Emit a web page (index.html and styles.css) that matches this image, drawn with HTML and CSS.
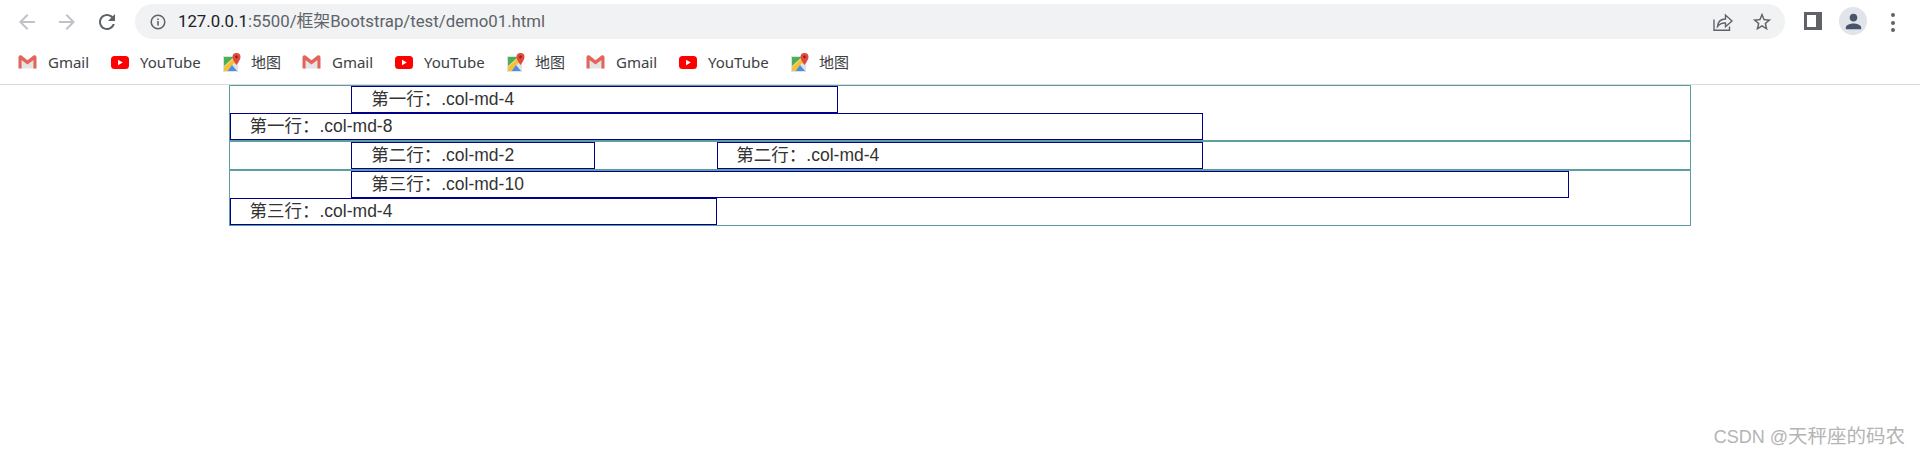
FILE: index.html
```html
<!DOCTYPE html>
<html lang="zh-CN">
<head>
<meta charset="utf-8">
<title>demo01</title>
<link rel="stylesheet" href="styles.css">
</head>
<body>
<svg class="defs" width="0" height="0" aria-hidden="true">
  <symbol id="i-gmail" viewBox="0 0 18 14">
    <path fill="#e4e4e4" d="M2 13.500h14V3L9 8 2 3z"/>
    <path fill="#d8d8d8" d="M2 13.500h1.500V5L2 3zM14.500 13.500H16V3l-1.500 2z"/>
    <path fill="#e5635b" d="M0 2.200C0 .6 1.800-.3 3 .6L9 5.200 15 .6c1.200-.9 3-.0 3 1.600V13.500h-3V5L9 9.500 3 5v8.500H0z"/>
  </symbol>
  <symbol id="i-yt" viewBox="0 0 18 13">
    <rect width="18" height="13" rx="3.500" fill="#f00"/>
    <path fill="#fff" d="M7 3.700v5.600l4.800-2.800z"/>
  </symbol>
  <symbol id="i-maps" viewBox="0 0 18 19">
    <path fill="#dfe3e6" d="M0 3h15v16H0z"/>
    <path fill="#4caf50" d="M1 4h10L1 13z"/>
    <path fill="#fbc02d" d="M1 18v-4L11 5h3v2L4 18z"/>
    <path fill="#4a90e2" d="M4.500 18l4.500-6 5 6z"/>
    <path fill="#e5483c" d="M13.500 0a4 4 0 0 0-4 4c0 3 4 8 4 8s4-5 4-8a4 4 0 0 0-4-4z"/>
    <circle cx="13.500" cy="4" r="1.400" fill="#8c2a22"/>
  </symbol>
</svg>

<header class="browser">
  <div class="toolbar">
    <svg class="nav nav-off" viewBox="0 0 24 24"><path d="M20 11H7.830l5.590-5.590L12 4l-8 8 8 8 1.410-1.410L7.830 13H20v-2z"/></svg>
    <svg class="nav nav-off" viewBox="0 0 24 24"><path d="M12 4l-1.410 1.410L16.170 11H4v2h12.170l-5.580 5.590L12 20l8-8z"/></svg>
    <svg class="nav nav-on" viewBox="0 0 24 24"><path d="M17.650 6.350C16.200 4.900 14.210 4 12 4c-4.420 0-7.990 3.580-7.990 8s3.570 8 7.990 8c3.730 0 6.840-2.550 7.730-6h-2.080c-.82 2.330-3.040 4-5.650 4-3.310 0-6-2.690-6-6s2.690-6 6-6c1.660 0 3.140.69 4.220 1.780L13 11h7V4l-2.350 2.350z"/></svg>
    <div class="omnibox">
      <svg class="info" viewBox="0 0 16 16"><circle cx="8" cy="8" r="6.800" fill="none" stroke="#5f6368" stroke-width="1.500"/><path fill="#5f6368" d="M7.200 7h1.600v4.500H7.200zM7.200 4.500h1.600v1.600H7.200z"/></svg>
      <div class="url"><span class="host">127.0.0.1</span>:5500/框架Bootstrap/test/demo01.html</div>
      <svg class="share" viewBox="0 0 20 20"><path fill="none" stroke="#5f6368" stroke-width="1.400" d="M1 7.500V18.300H16.500V14.500M4.500 14.500C5 9.500 8 7 12.500 7V3l6.500 6-6.500 5.700V11C9 10.700 6.500 12 4.500 14.500z"/></svg>
      <svg class="star" viewBox="0 0 24 24"><path fill="#5f6368" d="M22 9.240l-7.190-.62L12 2 9.190 8.630 2 9.240l5.460 4.730L5.820 21 12 17.270 18.180 21l-1.630-7.030L22 9.240zM12 15.400l-3.760 2.270 1-4.280-3.320-2.880 4.380-.38L12 6.100l1.710 4.040 4.380.38-3.320 2.880 1 4.280L12 15.400z"/></svg>
    </div>
    <div class="panel-icon"><span class="panel-hole"></span></div>
    <div class="avatar">
      <svg viewBox="0 0 24 24"><path fill="#46546c" d="M12 12c2.210 0 4-1.790 4-4s-1.790-4-4-4-4 1.790-4 4 1.790 4 4 4zm0 2c-2.670 0-8 1.340-8 4v2h16v-2c0-2.660-5.330-4-8-4z"/></svg>
    </div>
    <div class="menu"><i></i><i></i><i></i></div>
  </div>
  <nav class="bookmarks">
    <a class="bm bm-gmail"><svg class="ic-g"><use href="#i-gmail"/></svg>Gmail</a>
    <a class="bm bm-yt"><svg class="ic-y"><use href="#i-yt"/></svg>YouTube</a>
    <a class="bm bm-map"><svg class="ic-m"><use href="#i-maps"/></svg>地图</a>
    <a class="bm bm-gmail"><svg class="ic-g"><use href="#i-gmail"/></svg>Gmail</a>
    <a class="bm bm-yt"><svg class="ic-y"><use href="#i-yt"/></svg>YouTube</a>
    <a class="bm bm-map"><svg class="ic-m"><use href="#i-maps"/></svg>地图</a>
    <a class="bm bm-gmail"><svg class="ic-g"><use href="#i-gmail"/></svg>Gmail</a>
    <a class="bm bm-yt"><svg class="ic-y"><use href="#i-yt"/></svg>YouTube</a>
    <a class="bm bm-map"><svg class="ic-m"><use href="#i-maps"/></svg>地图</a>
  </nav>
</header>

<main class="container">
  <div class="row">
    <div class="col c-2-4">第一行：.col-md-4</div>
    <div class="col c-1-8">第一行：.col-md-8</div>
  </div>
  <div class="row">
    <div class="col c-2-2">第二行：.col-md-2</div>
    <div class="col c-5-4">第二行：.col-md-4</div>
  </div>
  <div class="row">
    <div class="col c-2-10">第三行：.col-md-10</div>
    <div class="col c-1-4">第三行：.col-md-4</div>
  </div>
</main>

<div class="watermark">CSDN @<span class="wm-cjk">天秤座的码农</span></div>
</body>
</html>
```
FILE: styles.css
```css
* { box-sizing: border-box; }
html, body { margin: 0; padding: 0; background: #fff; }
body { height: 454px; overflow: hidden; position: relative; }
.defs { position: absolute; }

.browser { height: 85px; border-bottom: 1px solid #d9dbde; background: #fff; }

.toolbar { height: 43px; padding-top: 4px; display: flex; align-items: flex-start; }
.nav { width: 24px; height: 24px; margin-top: 6px; flex: none; }
.nav-off { fill: #bfc2c6; }
.nav-on { fill: #5f6368; }
.nav:nth-child(1) { margin-left: 15px; }
.nav:nth-child(2) { margin-left: 16px; }
.nav:nth-child(3) { margin-left: 16px; }

.omnibox {
  margin-left: 16px;
  width: 1650px;
  height: 35px;
  border-radius: 18px;
  background: #f0f2f4;
  display: flex;
  align-items: center;
  flex: none;
}
.info { width: 16px; height: 16px; margin-left: 15px; flex: none; }
.url {
  margin-left: 12px;
  flex: 1;
  font: 16.800px/35px Roboto, "Noto Sans CJK SC", sans-serif;
  color: #5f6368;
  white-space: nowrap;
}
.host { color: #202124; }
.share { width: 20px; height: 20px; margin-right: 18px; flex: none; }
.star { width: 22px; height: 22px; margin-right: 12px; flex: none; }

.panel-icon {
  margin-left: 19px;
  margin-top: 8px;
  width: 18px;
  height: 18px;
  background: #5f6368;
  padding: 3px 6px 3px 3px;
  flex: none;
}
.panel-hole { display: block; width: 9px; height: 12px; background: #fff; }

.avatar {
  margin-left: 17px;
  margin-top: 3px;
  width: 28px;
  height: 28px;
  border-radius: 50%;
  background: #e1e4e9;
  display: flex;
  align-items: center;
  justify-content: center;
  flex: none;
}
.avatar svg { width: 23px; height: 23px; }

.menu {
  margin-left: 24px;
  margin-top: 9px;
  width: 4px;
  display: flex;
  flex-direction: column;
  gap: 3.500px;
  flex: none;
}
.menu i { display: block; width: 4px; height: 4px; border-radius: 50%; background: #5f6368; }

.bookmarks { height: 41px; padding-left: 18px; display: flex; align-items: flex-start; }
.bm {
  display: flex;
  align-items: center;
  height: 38px;
  font: 15px/38px "Noto Sans", "Noto Sans CJK SC", sans-serif;
  color: #3c4043;
  flex: none;
  white-space: nowrap;
}
.ic-g { width: 19px; height: 14px; margin-right: 11px; }
.ic-y { width: 18px; height: 13px; margin-right: 11px; }
.ic-m { width: 18px; height: 19px; margin-right: 10px; }
.bm-gmail { width: 93px; }
.bm-yt { width: 112px; }
.bm-map { width: 79px; }

.container { width: 1462.500px; margin: 0 auto; color: #333; font: 17.500px/25px "Liberation Sans", "Noto Sans CJK SC", sans-serif; }
.row {
  display: grid;
  grid-template-columns: repeat(12, 1fr);
  border: 1px solid cadetblue;
}
.col { border: 1px solid #00008b; padding: 0 18.750px; white-space: nowrap; }
.c-2-4 { grid-column: 2 / span 4; }
.c-1-8 { grid-column: 1 / span 8; }
.c-2-2 { grid-column: 2 / span 2; }
.c-5-4 { grid-column: 5 / span 4; }
.c-2-10 { grid-column: 2 / span 10; }
.c-1-4 { grid-column: 1 / span 4; }

.watermark {
  position: absolute;
  right: 15px;
  top: 425px;
  font: 18px/22px "Liberation Sans", "Noto Sans CJK SC", sans-serif;
  color: #b4b4b4;
  white-space: nowrap;
}
.wm-cjk { font-size: 19.500px; }
```
